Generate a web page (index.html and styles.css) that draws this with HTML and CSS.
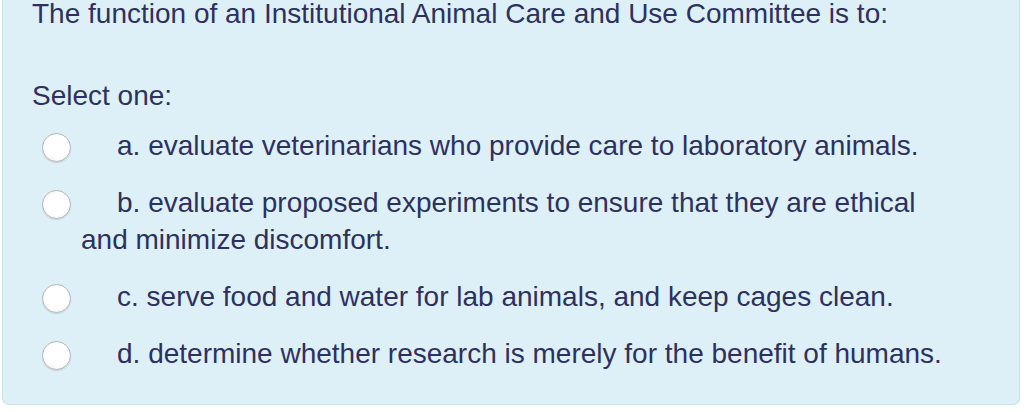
FILE: index.html
```html
<!DOCTYPE html>
<html>
<head>
<meta charset="utf-8">
<link rel="stylesheet" href="styles.css">
</head>
<body>
<div class="formulation">
  <div class="qtext">The function of an Institutional Animal Care and Use Committee is to:</div>
  <div class="prompt">Select one:</div>
  <div class="answers">
    <div class="answer"><span class="radio"></span><span class="label">a. evaluate veterinarians who provide care to laboratory animals.</span></div>
    <div class="answer"><span class="radio"></span><span class="label">b. evaluate proposed experiments to ensure that they are ethical and minimize discomfort.</span></div>
    <div class="answer"><span class="radio"></span><span class="label">c. serve food and water for lab animals, and keep cages clean.</span></div>
    <div class="answer"><span class="radio"></span><span class="label">d. determine whether research is merely for the benefit of humans.</span></div>
  </div>
</div>
</body>
</html>
```
FILE: styles.css
```css
html, body {
  margin: 0;
  padding: 0;
  background: #ffffff;
}
body {
  font-family: "Liberation Sans", Arial, sans-serif;
  color: #2e3060;
  font-size: 28px;
}
.formulation {
  margin: -2px 6px 0 2px;
  height: 407px;
  box-sizing: border-box;
  background: #def0f7;
  border: 1px solid #c3e3ed;
  border-top: none;
  border-radius: 0 0 7px 7px;
  padding: 0 62px 0 29px;
}
.qtext {
  line-height: 32px;
}
.prompt {
  margin-top: 50px;
  line-height: 32px;
}
.answers {
  margin-top: 15px;
}
.answer {
  padding-left: 49px;
  line-height: 37px;
  margin-bottom: 20px;
}
.radio {
  display: inline-block;
  vertical-align: -7px;
  width: 29px;
  height: 29px;
  box-sizing: border-box;
  border-radius: 50%;
  border: 1px solid #b4b4b4;
  background: radial-gradient(circle at 50% 40%, #ffffff 60%, #f1f1f1 100%);
  box-shadow: 0 1px 1px rgba(0,0,0,0.12);
  margin-left: -39px;
  margin-right: 46px;
}
```
